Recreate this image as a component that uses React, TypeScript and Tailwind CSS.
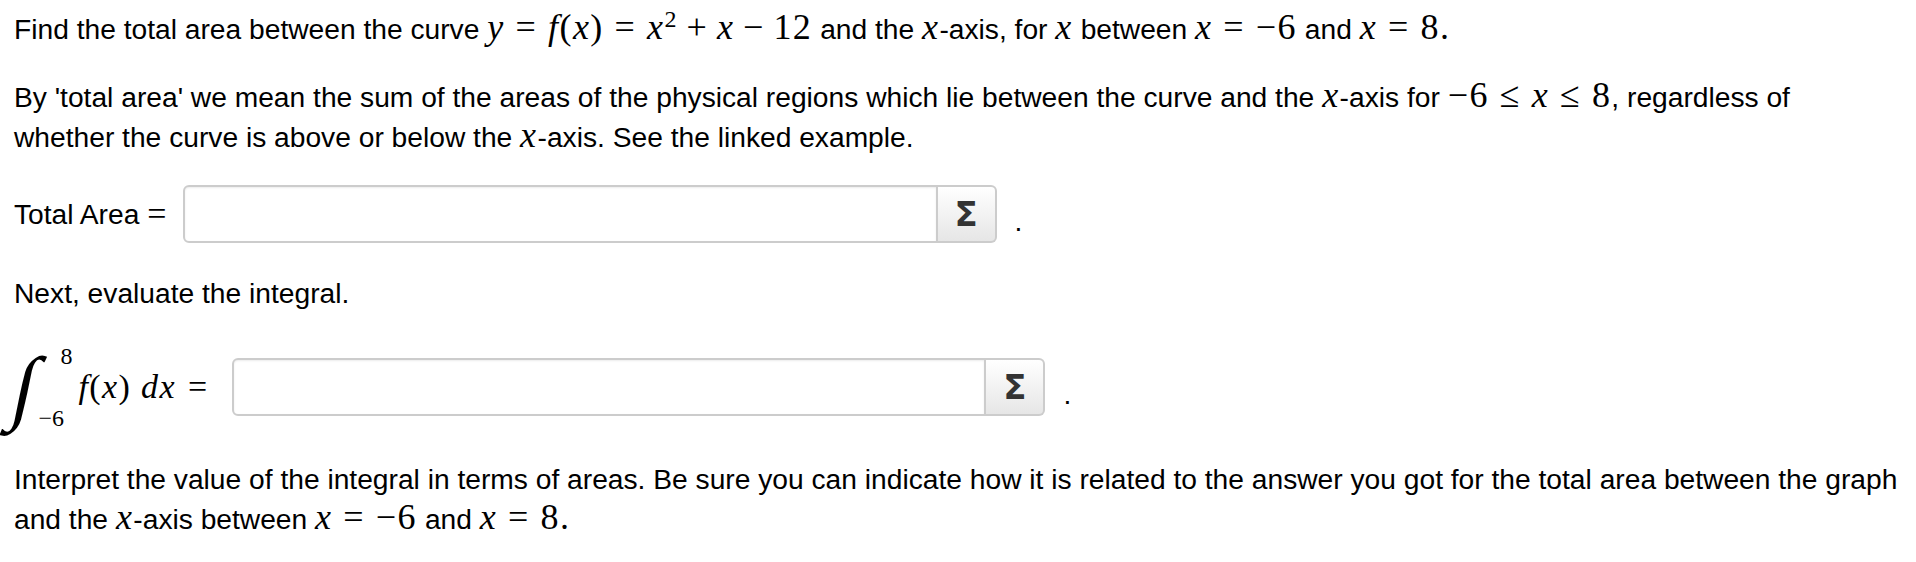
import type { ReactNode } from "react";

const sans = "font-['Liberation_Sans',Arial,sans-serif]";
const serif = "font-['Liberation_Serif','Times_New_Roman',serif]";

function M({ children }: { children: ReactNode }) {
  return (
    <span className={`${serif} text-[36px] leading-[0px] tracking-[0.04em] whitespace-nowrap`}>
      {children}
    </span>
  );
}

function V({ children }: { children: ReactNode }) {
  return <span className="italic">{children}</span>;
}

function Rel({ children }: { children: ReactNode }) {
  return <span className="mx-[0.3em]">{children}</span>;
}

function Bin({ children }: { children: ReactNode }) {
  return <span className="mx-[0.24em]">{children}</span>;
}

function AnswerBox({ width }: { width: string }) {
  return (
    <div className="flex h-[58px] items-stretch">
      <div
        className={`${width} rounded-l-[6px] border-2 border-[#cccccc] bg-white shadow-[inset_0_1px_2px_rgba(0,0,0,0.08)]`}
      />
      <button
        type="button"
        className="flex w-[59px] items-center justify-center rounded-r-[6px] border-2 border-l-0 border-[#cccccc] bg-gradient-to-b from-white to-[#e6e6e6]"
      >
        <span className="font-['DejaVu_Sans',sans-serif] text-[34px] leading-none font-bold text-[#333333]">
          Σ
        </span>
      </button>
      <span className="ml-[18px] self-center pt-[14px] text-[28.2px]">.</span>
    </div>
  );
}

export default function App() {
  return (
    <div className={`${sans} min-h-[562px] bg-white pt-[9px] pl-[14px] text-[28.2px] leading-[40px] text-black`}>
      <p className="mb-[28px] whitespace-nowrap">
        Find the total area between the curve{" "}
        <M>
          <V>y</V>
          <Rel>=</Rel>
          <V>f</V>(<V>x</V>)<Rel>=</Rel>
          <V>x</V>
          <sup className="text-[24px]">2</sup>
          <Bin>+</Bin>
          <V>x</V>
          <Bin>−</Bin>12
        </M>{" "}
        and the{" "}
        <M>
          <V>x</V>
        </M>
        -axis, for{" "}
        <M>
          <V>x</V>
        </M>{" "}
        between{" "}
        <M>
          <V>x</V>
          <Rel>=</Rel>−6
        </M>{" "}
        and{" "}
        <M>
          <V>x</V>
          <Rel>=</Rel>8.
        </M>
      </p>

      <p className="mb-[28px] whitespace-nowrap">
        By 'total area' we mean the sum of the areas of the physical regions which lie between the
        curve and the{" "}
        <M>
          <V>x</V>
        </M>
        -axis for{" "}
        <M>
          −6<Rel>≤</Rel>
          <V>x</V>
          <Rel>≤</Rel>8
        </M>
        , regardless of
        <br />
        whether the curve is above or below the{" "}
        <M>
          <V>x</V>
        </M>
        -axis. See the linked example.
      </p>

      <div className="mb-[30px] flex items-center">
        <span className="whitespace-nowrap">Total Area</span>
        <span className={`${serif} mr-[16px] ml-[8px] text-[34px]`}>=</span>
        <AnswerBox width="w-[755px]" />
      </div>

      <p className="mb-[34px]">Next, evaluate the integral.</p>

      <div className="mb-[32px] flex h-[80px] items-center">
        <div className={`${serif} flex h-[80px] items-center`}>
          <span className="inline-block -skew-x-12 text-[82px] leading-none">∫</span>
          <div className="flex h-[86px] flex-col justify-between text-[24px] leading-none">
            <span className="pl-[24px]">8</span>
            <span className="pl-[2px]">−6</span>
          </div>
        </div>
        <span className={`${serif} ml-[6px] text-[34px] tracking-[0.04em] whitespace-nowrap`}>
          <V>f</V>(<V>x</V>)<span className="ml-[10px]"><V>dx</V></span>
          <span className="mr-[24px] ml-[12px]">=</span>
        </span>
        <AnswerBox width="w-[754px]" />
      </div>

      <p className="whitespace-nowrap">
        Interpret the value of the integral in terms of areas. Be sure you can indicate how it is
        related to the answer you got for the total area between the graph
        <br />
        and the{" "}
        <M>
          <V>x</V>
        </M>
        -axis between{" "}
        <M>
          <V>x</V>
          <Rel>=</Rel>−6
        </M>{" "}
        and{" "}
        <M>
          <V>x</V>
          <Rel>=</Rel>8.
        </M>
      </p>
    </div>
  );
}
